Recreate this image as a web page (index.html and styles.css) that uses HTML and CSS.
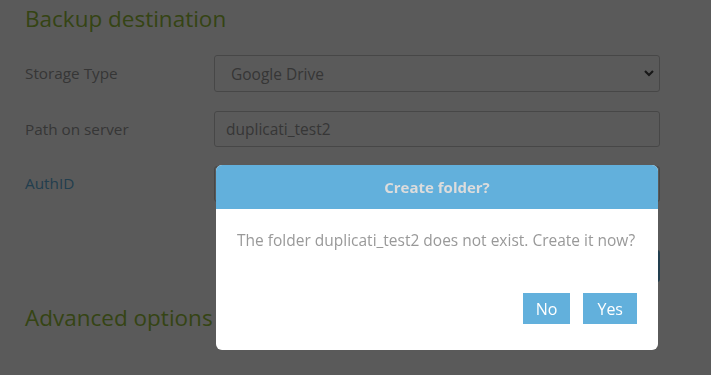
FILE: index.html
```html
<!DOCTYPE html>
<html>
<head>
<meta charset="utf-8">
<link rel="stylesheet" href="styles.css">
</head>
<body>
<div class="page">
  <h2 class="section-title">Backup destination</h2>
  <div class="row first">
    <label class="label">Storage Type</label>
    <div class="field select">
      <span>Google Drive</span>
      <svg class="caret" width="10" height="7" viewBox="0 0 10 7"><path d="M1 1 L5 5 L9 1" fill="none" stroke="currentColor" stroke-width="2.2"/></svg>
    </div>
  </div>
  <div class="row">
    <label class="label">Path on server</label>
    <div class="field input">duplicati_test2</div>
  </div>
  <div class="row">
    <label class="label link">AuthID</label>
    <div class="auth">
      <div class="field input"></div>
      <div class="auth-actions"><span class="btn-dark">AuthID</span></div>
    </div>
  </div>
  <h2 class="section-title adv">Advanced options</h2>
</div>
<div class="overlay"></div>
<div class="modal">
  <div class="modal-head">Create folder?</div>
  <div class="modal-body">The folder duplicati_test2 does not exist. Create it now?</div>
  <div class="modal-foot">
    <button class="btn">No</button>
    <button class="btn">Yes</button>
  </div>
</div>
</body>
</html>
```
FILE: styles.css
```css
html, body {
  margin: 0;
  padding: 0;
  background: #fff;
  font-family: "Open Sans", "DejaVu Sans", sans-serif;
  width: 711px;
  height: 375px;
  overflow: hidden;
}
.page {
  padding: 0 51px 0 25px;
}
.section-title {
  margin: 0;
  padding-top: 4px;
  height: 31px;
  font-weight: 400;
  font-size: 22.5px;
  line-height: 30px;
  color: #96c13a;
}
.row {
  display: flex;
  margin-top: 19px;
}
.row.first { margin-top: 20px; }
.label {
  width: 189px;
  font-size: 15.3px;
  color: #9a9a9a;
  padding-top: 8px;
}
.label.link { color: #62b0dc; padding-top: 7px; }
.field {
  flex: 1;
  box-sizing: border-box;
  height: 37px;
  border: 1px solid #c8c8c8;
  border-radius: 3px;
  font-size: 15.5px;
  color: #9a9a9a;
  display: flex;
  align-items: center;
}
.select { padding: 0 5px 0 16px; justify-content: space-between; }
.select .caret { color: #444; }
.input { padding: 0 11px; height: 36px; }
.auth { flex: 1; display: flex; flex-direction: column; }
.auth .input { flex: none; }
.auth-actions { display: flex; justify-content: flex-end; margin-top: 48px; }
.btn-dark {
  background: #62b0dc;
  color: #fff;
  height: 32px;
  width: 80px;
  border-radius: 3px;
}
.adv { margin-top: 17px; }
.overlay {
  position: fixed;
  inset: 0;
  background: rgba(0, 0, 0, 0.647);
}
.modal {
  position: absolute;
  left: 216px;
  top: 165px;
  width: 442px;
  height: 185px;
  background: #fff;
  border-radius: 6px;
  overflow: hidden;
  display: flex;
  flex-direction: column;
}
.modal-head {
  height: 44px;
  background: #62b0dc;
  color: #dcdcdc;
  font-weight: 700;
  font-size: 15px;
  display: flex;
  align-items: center;
  justify-content: center;
}
.modal-body {
  padding: 21px 21px 0;
  font-size: 15.5px;
  color: #999;
  line-height: 20px;
}
.modal-foot {
  margin-top: auto;
  padding: 0 21px 26px;
  display: flex;
  justify-content: flex-end;
  gap: 13px;
}
.btn {
  border: 0;
  background: #62b0dc;
  color: #fff;
  font-family: inherit;
  font-size: 16px;
  height: 31px;
  padding: 0 13px;
}
.btn + .btn { padding: 0 14px; }
```
